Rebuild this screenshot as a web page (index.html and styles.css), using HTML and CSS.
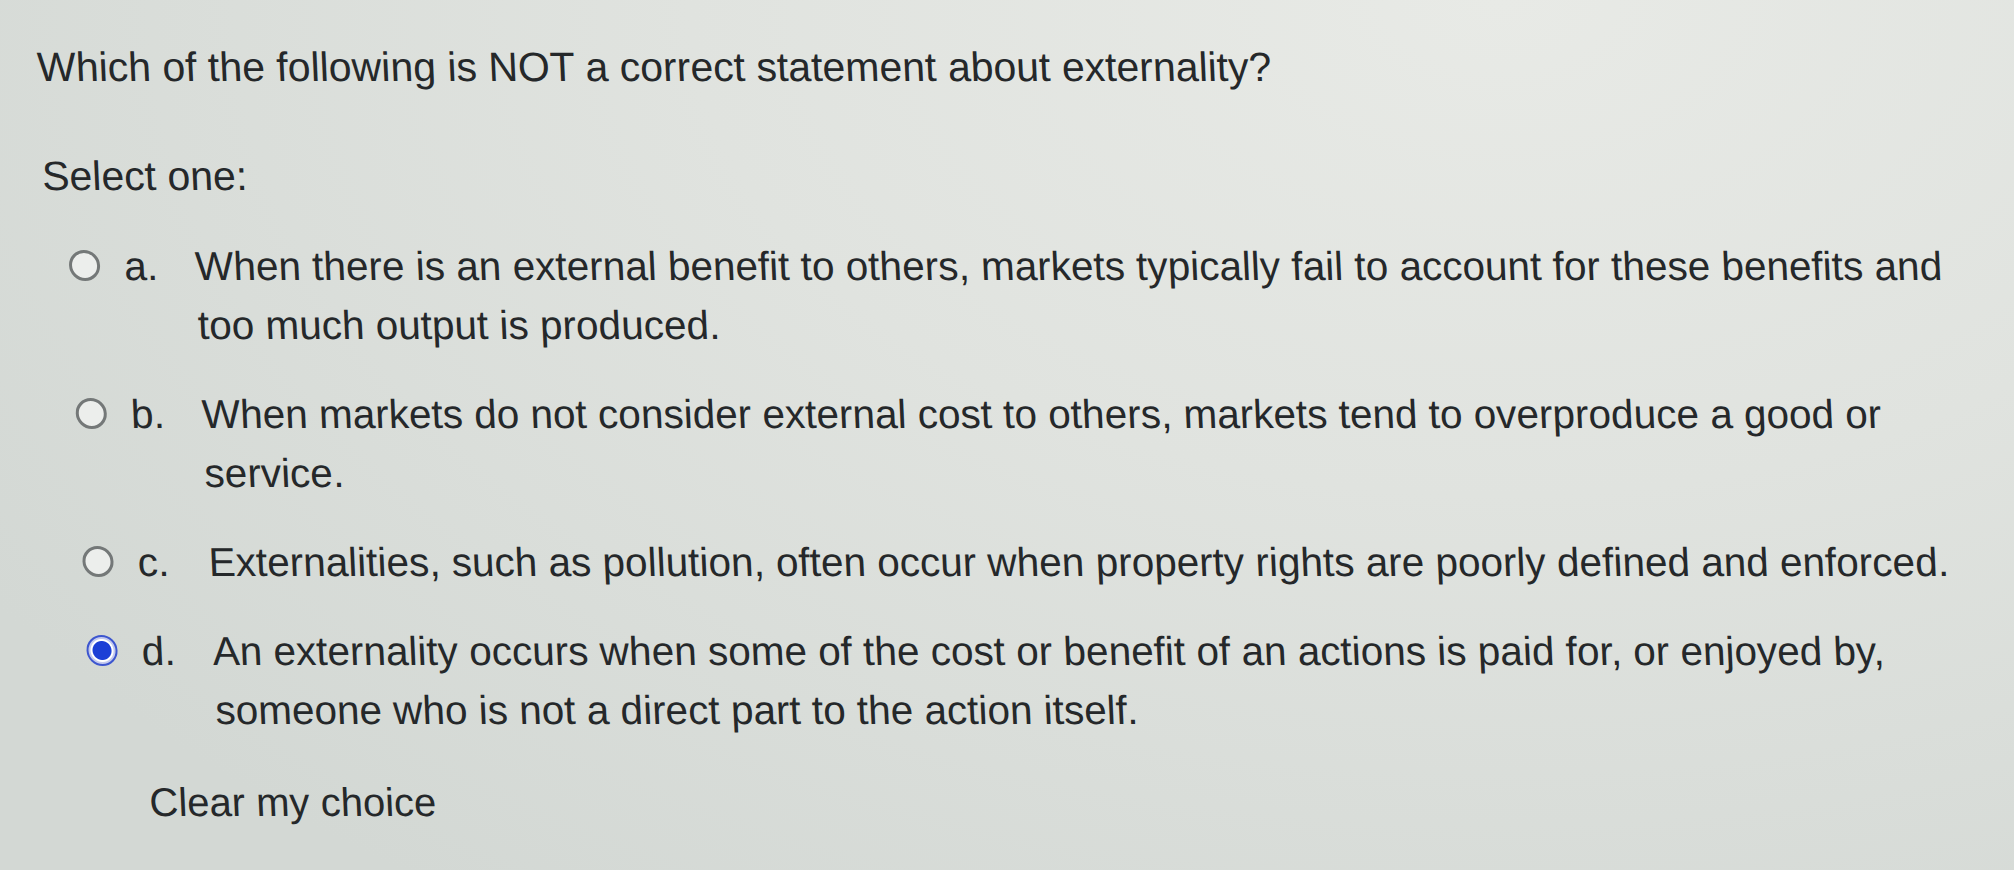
FILE: index.html
```html
<!DOCTYPE html>
<html lang="en">
<head>
<meta charset="utf-8">
<title>Question</title>
<link rel="stylesheet" href="styles.css">
</head>
<body>
<div class="page">
  <div class="question">
    <div class="qtext">Which of the following is NOT a correct statement about externality?</div>
    <div class="prompt">Select one:</div>
    <div class="answers">
      <div class="option">
        <span class="radio"></span>
        <span class="letter">a.</span>
        <span class="text">When there is an external benefit to others, markets typically fail to account for these benefits and too much output is produced.</span>
      </div>
      <div class="option">
        <span class="radio"></span>
        <span class="letter">b.</span>
        <span class="text">When markets do not consider external cost to others, markets tend to overproduce a good or service.</span>
      </div>
      <div class="option">
        <span class="radio"></span>
        <span class="letter">c.</span>
        <span class="text">Externalities, such as pollution, often occur when property rights are poorly defined and enforced.</span>
      </div>
      <div class="option">
        <span class="radio checked"></span>
        <span class="letter">d.</span>
        <span class="text">An externality occurs when some of the cost or benefit of an actions is paid for, or enjoyed by, someone who is not a direct part to the action itself.</span>
      </div>
    </div>
    <div class="clear">Clear my choice</div>
  </div>
</div>
</body>
</html>
```
FILE: styles.css
```css
html, body {
  margin: 0;
  padding: 0;
}
body {
  width: 2014px;
  height: 870px;
  overflow: hidden;
  background: radial-gradient(ellipse 1800px 1100px at 1500px 0px, #e8eae6 0%, #e0e3df 45%, #d3d8d4 100%);
  font-family: "Liberation Sans", Arial, sans-serif;
  color: #25282a;
}
.page {
  padding: 38px 0 0 34px;
}
.question {
  transform: skewX(2.6deg);
  transform-origin: 0 -38px;
}
.qtext, .prompt {
  font-size: 41px;
  line-height: 59px;
}
.option {
  font-size: 40.5px;
  line-height: 59px;
}
.clear {
  font-size: 40px;
  line-height: 59px;
}
.prompt {
  margin-top: 50px;
}
.answers {
  margin-top: 31px;
  display: flex;
  flex-direction: column;
  gap: 30px;
}
.option {
  display: flex;
  align-items: flex-start;
}
.radio {
  flex: none;
  box-sizing: border-box;
  width: 31px;
  height: 31px;
  margin: 13px 0 0 23px;
  border: 3px solid #747878;
  border-radius: 50%;
  background: #eceeec;
}
.radio.checked {
  border: 2px solid #3d56cf;
  background: radial-gradient(circle, #1c3fd6 0 9px, #ffffff 10px 11px, #c3c9ee 12px);
}
.letter {
  flex: none;
  width: 71px;
  margin-left: 24px;
}
.text {
  flex: none;
  width: 1790px;
}
.clear {
  margin-top: 33px;
  padding-left: 79px;
}
```
